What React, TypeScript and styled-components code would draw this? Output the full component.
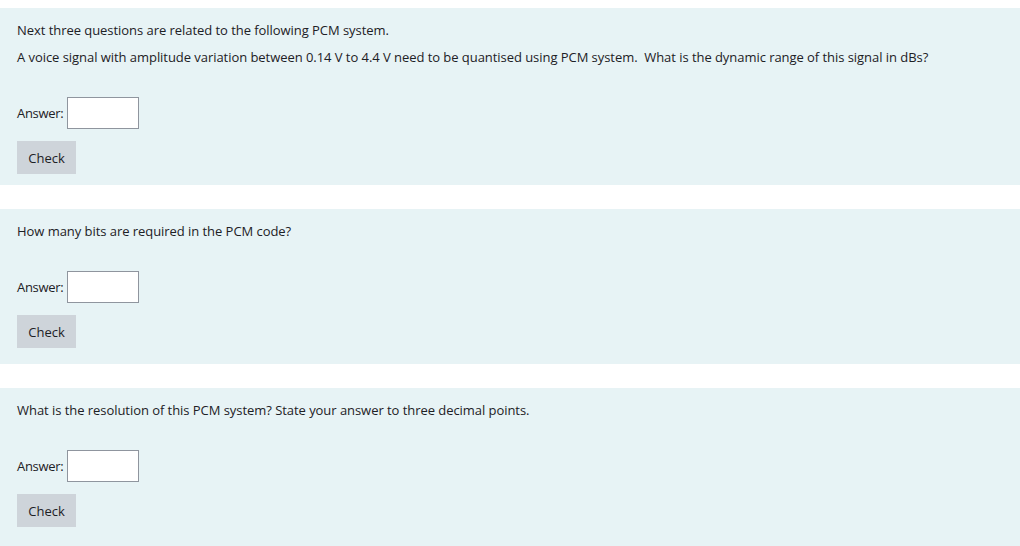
import React from "react";
import styled, { createGlobalStyle } from "styled-components";

const GlobalStyle = createGlobalStyle`
  html, body {
    margin: 0;
    padding: 0;
    background: #ffffff;
  }
  body {
    font-family: "Open Sans", "Noto Sans", sans-serif;
    font-size: 13px;
    letter-spacing: -0.05px;
    color: #1d2125;
  }
`;

const Page = styled.div`
  display: flex;
  flex-direction: column;
  gap: 24px;
  padding-top: 8px;
`;

const Formulation = styled.div<{ $tail: number }>`
  background: #e7f3f5;
  padding: 12px 17px ${(p) => p.$tail}px;
`;

const QText = styled.p`
  margin: 0 0 7px;
  line-height: 20px;
  white-space: pre;
`;

const AnswerRow = styled.div`
  display: flex;
  align-items: center;
  margin-top: 30px;
  height: 32px;
`;

const Label = styled.label`
  line-height: 20px;
  letter-spacing: -0.3px;
`;

const Input = styled.input`
  box-sizing: border-box;
  width: 72px;
  height: 32px;
  margin: 0 0 0 4px;
  border: 1px solid #8f959e;
  background: #ffffff;
  font: inherit;
  padding: 4px 8px;
  outline: none;
`;

const CheckButton = styled.button`
  display: block;
  box-sizing: border-box;
  height: 33px;
  width: 59px;
  margin-top: 12px;
  padding: 0;
  border: none;
  border-radius: 0;
  background: #ced4da;
  color: #1d2125;
  font: inherit;
  line-height: 20px;
  cursor: pointer;
`;

type Question = { lines: string[]; tail: number };

const questions: Question[] = [
  {
    lines: [
      "Next three questions are related to the following PCM system.",
      "A voice signal with amplitude variation between 0.14 V to 4.4 V need to be quantised using PCM system.  What is the dynamic range of this signal in dBs?",
    ],
    tail: 11,
  },
  { lines: ["How many bits are required in the PCM code?"], tail: 16 },
  {
    lines: ["What is the resolution of this PCM system? State your answer to three decimal points."],
    tail: 19,
  },
];

export default function App() {
  return (
    <>
      <GlobalStyle />
      <Page>
        {questions.map((q, i) => (
          <Formulation key={i} $tail={q.tail}>
            {q.lines.map((line, j) => (
              <QText key={j}>{line}</QText>
            ))}
            <AnswerRow>
              <Label htmlFor={`ans-${i}`}>Answer:</Label>
              <Input id={`ans-${i}`} type="text" />
            </AnswerRow>
            <CheckButton type="button">Check</CheckButton>
          </Formulation>
        ))}
      </Page>
    </>
  );
}
